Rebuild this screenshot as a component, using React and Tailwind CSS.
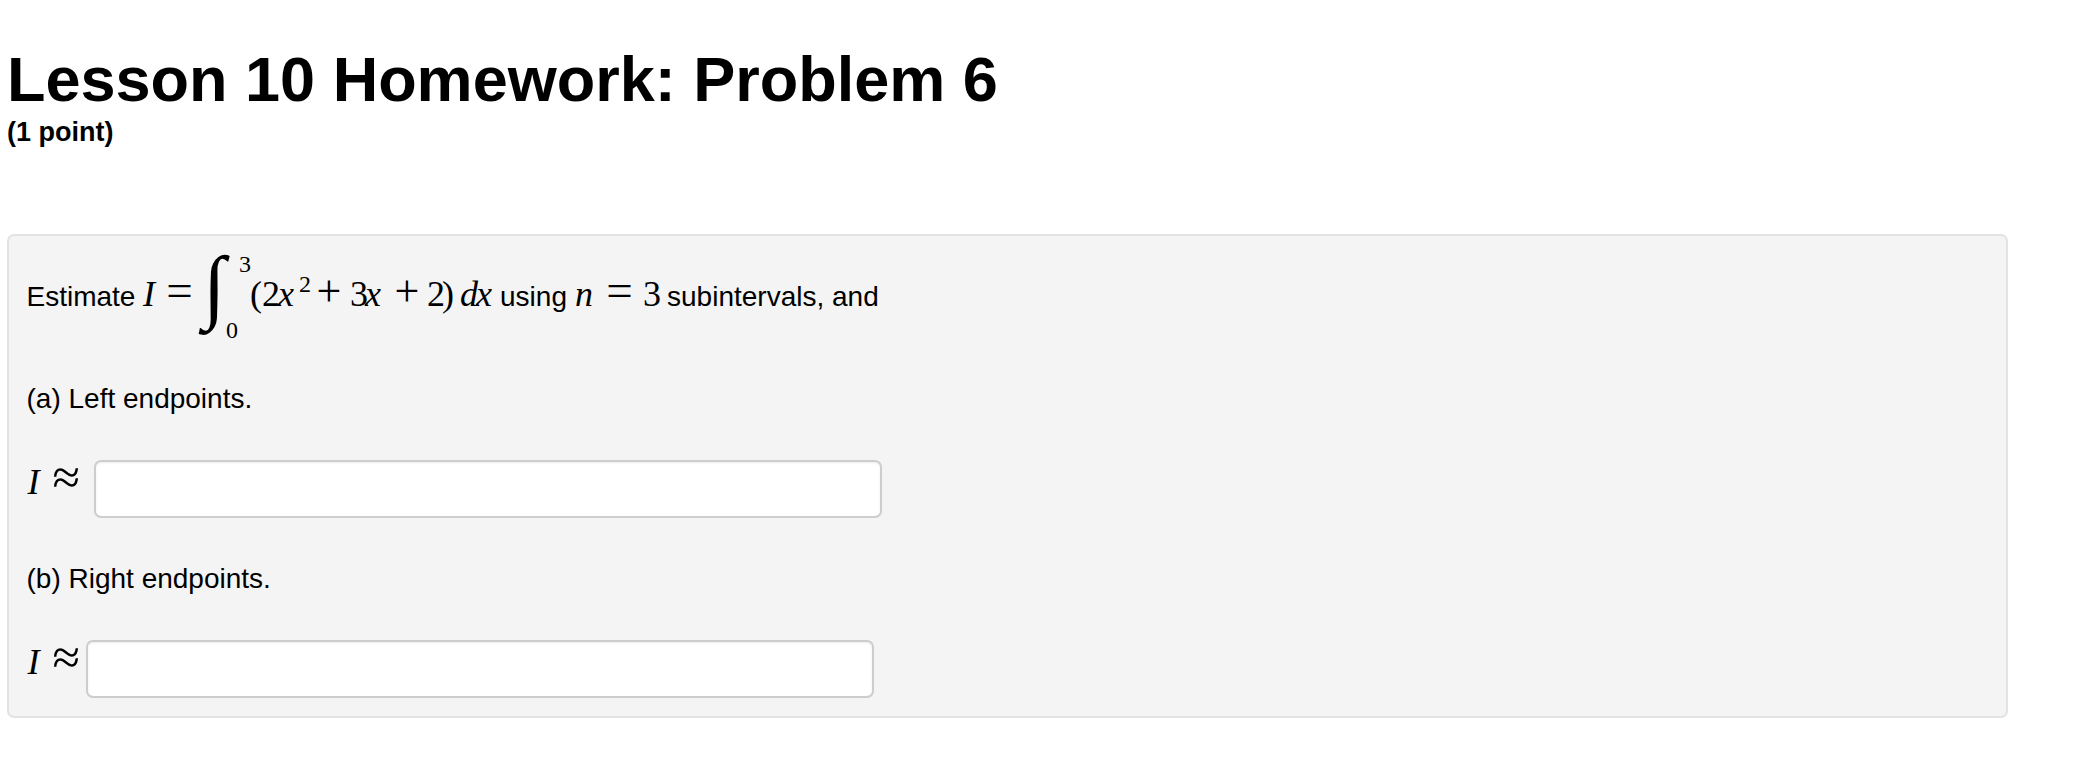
import React from 'react';

// one math token: fixed-width box so each glyph lands where MathJax put it
function T({ w, className = '', children }) {
  return (
    <span className={`inline-block leading-[0] font-['Liberation_Serif',serif] ${w} ${className}`}>
      {children}
    </span>
  );
}

function Approx({ gap }) {
  return (
    <div className="h-[58px] leading-[50.6px] text-[28px] whitespace-nowrap">
      <T w="w-[22px]" className="pl-[1px] text-[36px] italic">I</T>
      <T w={gap} className="pl-[4px] text-[50px]">≈</T>
    </div>
  );
}

function Answer() {
  return (
    <input
      type="text"
      className="w-[788px] h-[58px] rounded-[7px] border-2 border-[#cdcdcd] bg-white shadow-[inset_0_1px_2px_rgba(0,0,0,0.08)] outline-none"
    />
  );
}

export default function App() {
  return (
    <div className="min-h-[763px] bg-white text-black font-['Liberation_Sans',Arial,sans-serif] pl-[7px] pt-[48px]">
      {/* Header */}
      <h1 className="text-[63px] leading-[63px] font-bold">Lesson 10 Homework: Problem 6</h1>
      <p className="mt-[8px] text-[27px] leading-[27px] font-bold">(1 point)</p>

      {/* Problem well */}
      <div className="mt-[88px] w-[2001px] rounded-[7px] border-2 border-[#e3e3e3] bg-[#f4f4f4] px-[17.5px] pt-[17.5px] pb-[17.5px]">
        <div className="text-[28px] leading-[85.6px] whitespace-nowrap">
          <span>Estimate</span>
          <T w="w-[27.6px]" className="pl-[7.6px] text-[36px] italic">I</T>
          <T w="w-[33px]" className="text-center text-[47px]">=</T>
          <T w="w-[24px]" className="pl-[7px] text-[82px] relative top-[7px]">∫</T>
          <T w="w-[19px]" className="pl-[6px] text-[24px] relative top-[32px]">0</T>
          <T w="w-[11px]" className="text-[24px] relative -top-[34px]">3</T>
          <T w="w-[12px]" className="text-[36px]">(</T>
          <T w="w-[16px]" className="text-[36px]">2</T>
          <T w="w-[21px]" className="text-[36px] italic">x</T>
          <T w="w-[12px]" className="text-[24px] relative -top-[14px]">2</T>
          <T w="w-[36px]" className="text-center text-[44px]">+</T>
          <T w="w-[18px]" className="pl-[3px] text-[36px]">3</T>
          <T w="w-[25px]" className="text-[36px] italic">x</T>
          <T w="w-[34px]" className="text-center text-[44px]">+</T>
          <T w="w-[18px]" className="pl-[3px] text-[36px]">2</T>
          <T w="w-[18px]" className="text-[36px]">)</T>
          <T w="w-[16px]" className="text-[36px] italic">d</T>
          <T w="w-[16px]" className="text-[36px] italic">x</T>
          <span className="inline-block w-[83px] pl-[8px] leading-[0]">using</span>
          <T w="w-[28px]" className="text-[36px] italic">n</T>
          <T w="w-[32px]" className="pl-[1px] text-center text-[47px]">=</T>
          <T w="w-[23px]" className="pl-[8px] text-[36px]">3</T>
          <span className="pl-[9px]">subintervals, and</span>
        </div>

        <p className="mt-[44.3px] text-[28px] leading-[32px]">(a) Left endpoints.</p>

        <div className="mt-[44.7px] flex items-start">
          <Approx gap="w-[45.5px]" />
          <Answer />
        </div>

        <p className="mt-[45.3px] text-[28px] leading-[32px]">(b) Right endpoints.</p>

        <div className="mt-[44.7px] flex items-start">
          <Approx gap="w-[37.5px]" />
          <Answer />
        </div>
      </div>
    </div>
  );
}
